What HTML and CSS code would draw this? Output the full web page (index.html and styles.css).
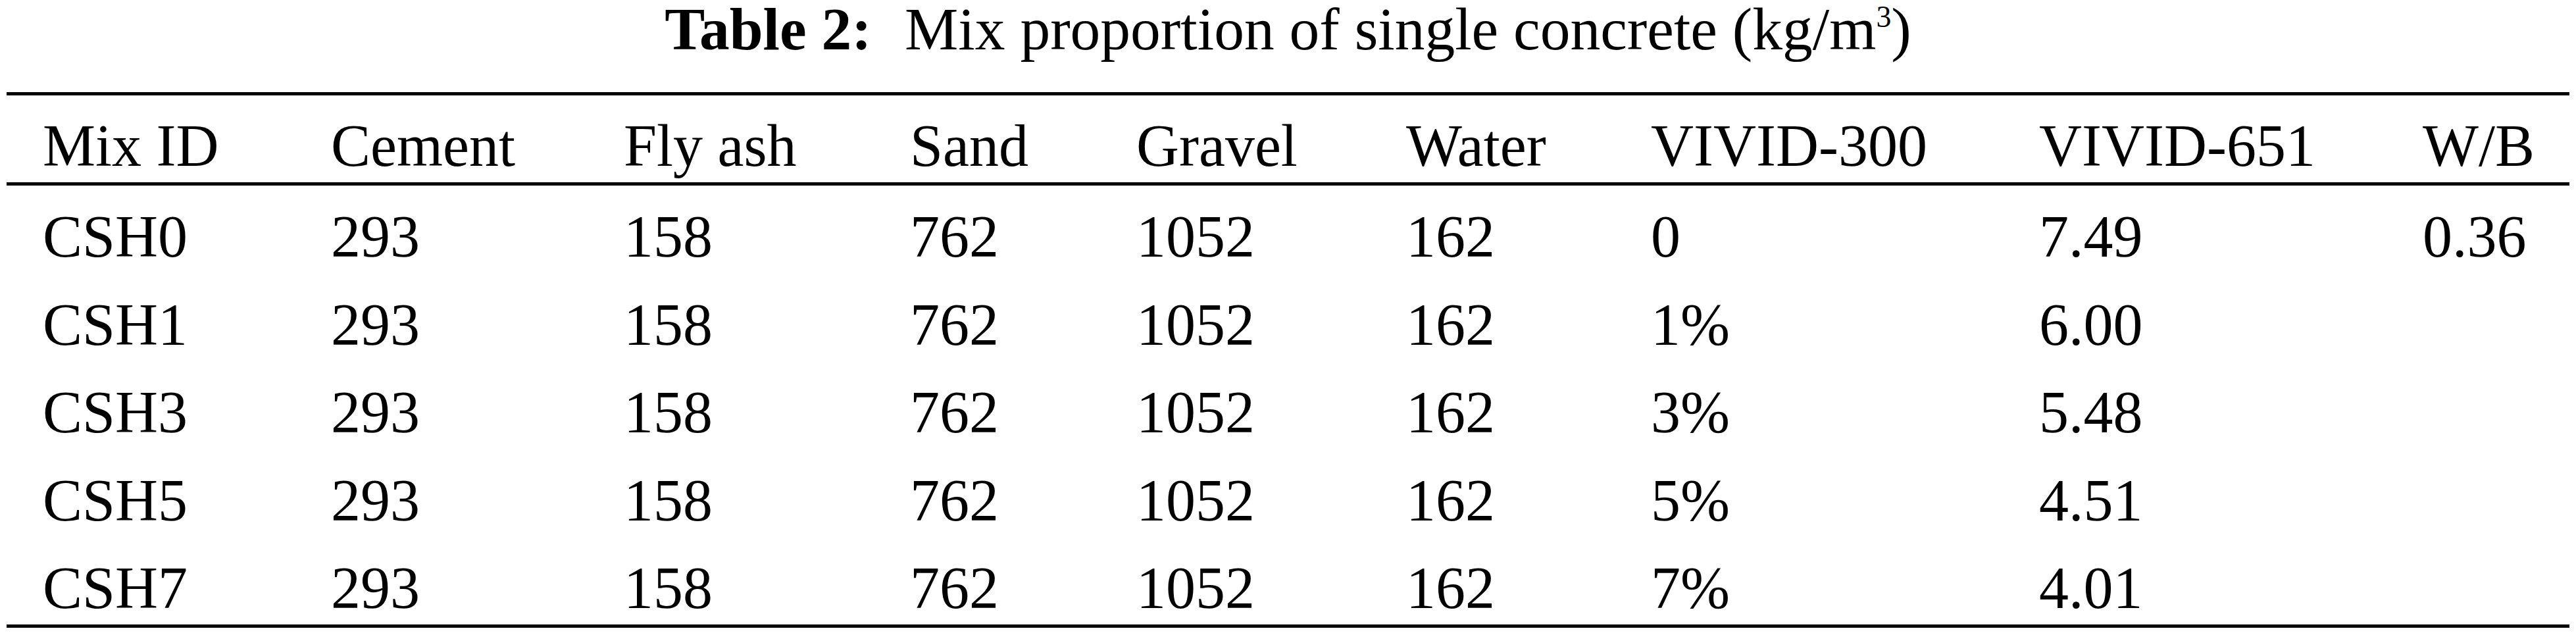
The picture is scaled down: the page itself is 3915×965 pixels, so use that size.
FILE: index.html
```html
<!DOCTYPE html>
<html lang="en">
<head>
<meta charset="utf-8">
<title>Table 2: Mix proportion of single concrete</title>
<link rel="stylesheet" href="styles.css">
</head>
<body>
<div class="page">
  <div class="caption"><span class="label">Table 2:</span>Mix proportion of single concrete (kg/m<sup class="sup">3</sup>)</div>
  <table class="mix">
    <colgroup>
      <col class="c1"><col class="c2"><col class="c3"><col class="c4"><col class="c5"><col class="c6"><col class="c7"><col class="c8"><col class="c9">
    </colgroup>
    <thead>
      <tr>
        <th>Mix ID</th><th>Cement</th><th>Fly ash</th><th>Sand</th><th>Gravel</th><th>Water</th><th>VIVID-300</th><th>VIVID-651</th><th>W/B</th>
      </tr>
    </thead>
    <tbody>
      <tr><td>CSH0</td><td>293</td><td>158</td><td>762</td><td>1052</td><td>162</td><td>0</td><td>7.49</td><td>0.36</td></tr>
      <tr><td>CSH1</td><td>293</td><td>158</td><td>762</td><td>1052</td><td>162</td><td>1%</td><td>6.00</td><td></td></tr>
      <tr><td>CSH3</td><td>293</td><td>158</td><td>762</td><td>1052</td><td>162</td><td>3%</td><td>5.48</td><td></td></tr>
      <tr><td>CSH5</td><td>293</td><td>158</td><td>762</td><td>1052</td><td>162</td><td>5%</td><td>4.51</td><td></td></tr>
      <tr><td>CSH7</td><td>293</td><td>158</td><td>762</td><td>1052</td><td>162</td><td>7%</td><td>4.01</td><td></td></tr>
    </tbody>
  </table>
</div>
</body>
</html>
```
FILE: styles.css
```css
html, body {
  margin: 0;
  padding: 0;
  background: #ffffff;
}
body {
  font-family: "Liberation Serif", "Times New Roman", serif;
  color: #000000;
  font-size: 90px;
}
.page {
  width: 3915px;
  padding: 0 10px;
  box-sizing: border-box;
}
.caption {
  font-size: 91.5px;
  text-align: center;
  line-height: 88px;
  height: 88px;
  margin-bottom: 52px;
  white-space: nowrap;
}
.label {
  font-weight: bold;
  margin-right: 0.55em;
}
.sup {
  font-size: 0.5em;
  line-height: 0;
  vertical-align: 0.75em;
}
.mix {
  width: 3895px;
  table-layout: fixed;
  border-collapse: collapse;
  border-top: 5px solid #000;
  border-bottom: 5px solid #000;
}
.c1 { width: 438px; }
.c2 { width: 445px; }
.c3 { width: 435px; }
.c4 { width: 344px; }
.c5 { width: 410px; }
.c6 { width: 372px; }
.c7 { width: 590px; }
.c8 { width: 583px; }
.c9 { width: 278px; }
.mix th,
.mix td {
  text-align: left;
  font-weight: normal;
  white-space: nowrap;
  line-height: 100px;
  padding-left: 55px;
  padding-right: 0;
  vertical-align: top;
}
.mix th {
  padding-top: 26.6px;
  padding-bottom: 5.4px;
  border-bottom: 5px solid #000;
}
.mix td {
  padding-top: 28.5px;
  padding-bottom: 5px;
}
```
